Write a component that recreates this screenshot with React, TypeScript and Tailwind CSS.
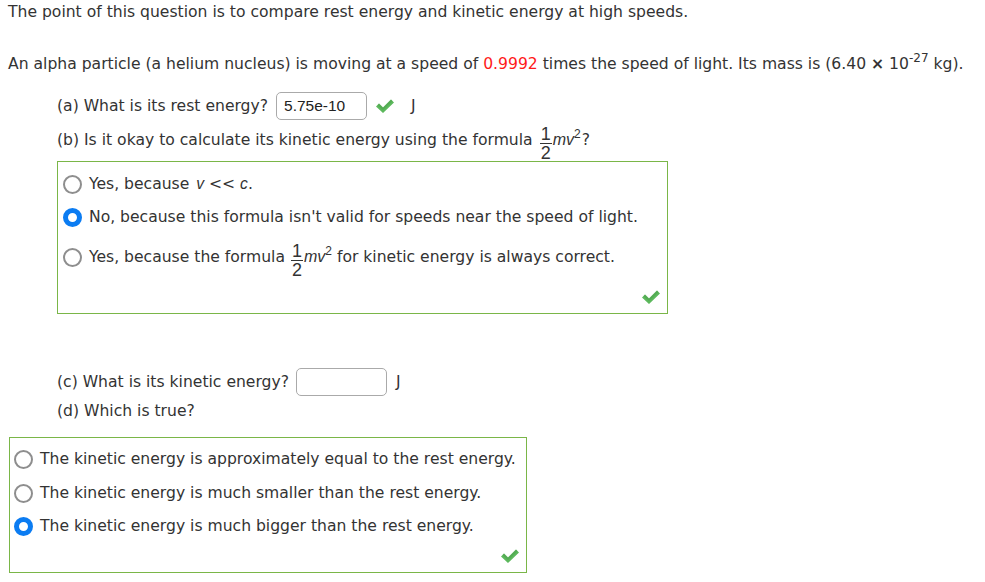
const body = { fontFamily: 'Verdana, "DejaVu Sans", sans-serif' };
const mathFont = { fontFamily: '"Liberation Sans", Arial, sans-serif' };

function Check({ className = '' }: { className?: string }) {
  return (
    <svg width="20" height="16" viewBox="0 0 20 16" className={className}>
      <path d="M1 8.5 L4 5.5 L8 9.5 L16 1.5 L19 4.5 L8 15 Z" fill="#5cb85c" />
      <path d="M4 5.5 L8 9.5 L16 1.5 L17.5 3 L8 12 L2.5 7 Z" fill="#4a9e4a" opacity="0.5" />
    </svg>
  );
}

function Radio({ on }: { on?: boolean }) {
  return on ? (
    <span className="inline-block w-[19px] h-[19px] rounded-full border-[5px] border-[#0b7cf2] bg-white shrink-0" />
  ) : (
    <span className="inline-block w-[19px] h-[19px] rounded-full border-2 border-[#8e8e8e] bg-white shrink-0" />
  );
}

function Half() {
  return (
    <span className="inline-flex flex-col items-center align-middle leading-none text-[18px] mx-[1px] relative top-[3px]" style={mathFont}>
      <span className="px-[1px]">1</span>
      <span className="w-full border-t border-[#333]" />
      <span>2</span>
    </span>
  );
}

function MV() {
  return (
    <span style={mathFont} className="text-[16px] whitespace-nowrap">
      <i>mv</i>
      <span className="text-[12px] relative -top-[7px] leading-none">2</span>
    </span>
  );
}

export default function App() {
  return (
    <div className="w-[985px] h-[582px] bg-white text-[#333] text-[15.6px] leading-[24px] relative whitespace-nowrap" style={body}>
      <p className="absolute left-[8px] top-[0px]">The point of this question is to compare rest energy and kinetic energy at high speeds.</p>

      <div className="pt-[52px] pl-[8px]">
        <p className="h-[24px]">
          An alpha particle (a helium nucleus) is moving at a speed of <span className="text-[#ff1a1a]">0.9992</span> times the speed of light. Its mass is (6.40 <b>×</b> 10<span className="text-[12px] relative -top-[7px] leading-none">-27</span> kg).
        </p>

        <div className="pl-[49px] mt-[16px] flex items-center h-[28px]">
          <span>(a) What is its rest energy?</span>
          <span className="ml-[8px] w-[91px] h-[28px] border border-[#aaa] rounded-[5px] flex items-center pl-[7px] text-[15.5px] text-[#222]" style={mathFont}>5.75e-10</span>
          <Check className="ml-[8px]" />
          <span className="ml-[16px]">J</span>
        </div>

        <div className="pl-[49px] mt-[3px] flex items-center h-[34px]">
          <span>(b) Is it okay to calculate its kinetic energy using the formula</span>
          <span className="ml-[6px]"><Half /></span>
          <MV />
          <span className="ml-[1px]">?</span>
        </div>

        <div className="ml-[49px] mt-[4px] w-[611px] h-[153px] border border-[#7ab648] pl-[5px] pt-[10px] relative">
          <div className="flex items-center gap-[7px] h-[24px]">
            <Radio />
            <span>Yes, because <i style={mathFont} className="ml-[2px]">v</i> &lt;&lt; <i style={mathFont}>c</i>.</span>
          </div>
          <div className="flex items-center gap-[7px] h-[24px] mt-[9px]">
            <Radio on />
            <span>No, because this formula isn't valid for speeds near the speed of light.</span>
          </div>
          <div className="flex items-center gap-[7px] h-[24px] mt-[16px]">
            <Radio />
            <span>Yes, because the formula <Half /><MV /> for kinetic energy is always correct.</span>
          </div>
          <Check className="absolute right-[6px] bottom-[8px]" />
        </div>

        <div className="pl-[49px] mt-[54px] flex items-center h-[28px]">
          <span>(c) What is its kinetic energy?</span>
          <span className="ml-[7px] w-[91px] h-[28px] border border-[#aaa] rounded-[5px]" />
          <span className="ml-[9px]">J</span>
        </div>

        <div className="pl-[49px] mt-[3px]">(d) Which is true?</div>

        <div className="ml-[1px] mt-[14px] w-[518px] h-[136px] border border-[#7ab648] pl-[4px] pt-[9px] relative">
          <div className="flex items-center gap-[7px] h-[24px]">
            <Radio />
            <span>The kinetic energy is approximately equal to the rest energy.</span>
          </div>
          <div className="flex items-center gap-[7px] h-[24px] mt-[10px]">
            <Radio />
            <span>The kinetic energy is much smaller than the rest energy.</span>
          </div>
          <div className="flex items-center gap-[7px] h-[24px] mt-[9px]">
            <Radio on />
            <span>The kinetic energy is much bigger than the rest energy.</span>
          </div>
          <Check className="absolute right-[6px] bottom-[8px]" />
        </div>
      </div>
    </div>
  );
}
